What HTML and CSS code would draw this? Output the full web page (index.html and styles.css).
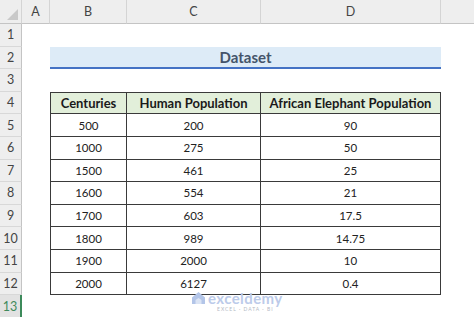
FILE: index.html
```html
<!DOCTYPE html>
<html lang="en">
<head>
    <meta charset="UTF-8">
    <title>Dataset</title>
    <link rel="stylesheet" href="styles.css">
</head>
<body>
    <div class="sheet">
        <!-- column headers -->
        <div class="corner"><span class="corner-mark"></span></div>
        <div class="col-head">A</div>
        <div class="col-head">B</div>
        <div class="col-head">C</div>
        <div class="col-head">D</div>
        <div class="col-head last"></div>

        <div class="row-head">1</div>

        <div class="row-head">2</div>
        <div class="title">Dataset</div>

        <div class="row-head">3</div>

        <div class="row-head">4</div>
        <div class="cell b head first-row">Centuries</div>
        <div class="cell c head first-row">Human Population</div>
        <div class="cell d head first-row">African Elephant Population</div>

        <div class="row-head">5</div>
        <div class="cell b">500</div>
        <div class="cell c">200</div>
        <div class="cell d">90</div>

        <div class="row-head">6</div>
        <div class="cell b">1000</div>
        <div class="cell c">275</div>
        <div class="cell d">50</div>

        <div class="row-head">7</div>
        <div class="cell b">1500</div>
        <div class="cell c">461</div>
        <div class="cell d">25</div>

        <div class="row-head">8</div>
        <div class="cell b">1600</div>
        <div class="cell c">554</div>
        <div class="cell d">21</div>

        <div class="row-head">9</div>
        <div class="cell b">1700</div>
        <div class="cell c">603</div>
        <div class="cell d">17.5</div>

        <div class="row-head">10</div>
        <div class="cell b">1800</div>
        <div class="cell c">989</div>
        <div class="cell d">14.75</div>

        <div class="row-head">11</div>
        <div class="cell b">1900</div>
        <div class="cell c">2000</div>
        <div class="cell d">10</div>

        <div class="row-head">12</div>
        <div class="cell b">2000</div>
        <div class="cell c">6127</div>
        <div class="cell d">0.4</div>

        <div class="row-head selected">13</div>

        <!-- watermark logo -->
        <div class="watermark">
            <svg class="wm-icon" width="15" height="14" viewBox="0 0 15 14">
                <path d="M1 6.5 L7.5 1 L14 6.5 L14 13 L1 13 Z" fill="#b3c5e8"/>
                <path d="M4.5 13 L4.5 9 L7.5 7 L10.5 9 L10.5 13 Z" fill="#dbe4f4"/>
            </svg>
            <div class="wm-text">
                <span class="wm-name">exceldemy</span>
                <span class="wm-sub">EXCEL · DATA · BI</span>
            </div>
        </div>
    </div>
</body>
</html>
```

FILE: styles.css
```css
body {
    margin: 0;
    background-color: #ffffff;
    font-family: Lato, "Open Sans", sans-serif;
    color: #222;
}

.sheet {
    position: relative;
    display: grid;
    grid-template-columns: 22px 28px 77px 134px 180px 1fr;
    grid-template-rows: 24px repeat(13, 22.6px);
    width: 474px;
    height: 317px;
    overflow: hidden;
}

.corner,
.col-head {
    background-color: #eeeeee;
    border-right: 1px solid #d4d4d4;
    border-bottom: 1px solid #c4c4c4;
    display: flex;
    align-items: center;
    justify-content: center;
    font-size: 12.5px;
    color: #444;
}

.col-head.last {
    border-right: none;
}

.corner {
    position: relative;
}

.corner-mark {
    position: absolute;
    right: 3px;
    bottom: 3px;
    width: 0;
    height: 0;
    border-left: 11px solid transparent;
    border-bottom: 11px solid #c9c9c9;
}

.row-head {
    grid-column: 1;
    background-color: #eeeeee;
    border-right: 1px solid #c4c4c4;
    border-bottom: 1px solid #d8d8d8;
    display: flex;
    align-items: center;
    justify-content: center;
    font-size: 12.5px;
    color: #444;
}

.row-head.selected {
    background-color: #e2e2e2;
    color: #3f8a5c;
    border-right: 2px solid #3c8a5a;
    border-bottom: none;
}

.title {
    grid-column: 3 / 6;
    background-color: #ddebf7;
    border-bottom: 2px solid #4472c4;
    display: flex;
    align-items: center;
    justify-content: center;
    font-size: 15px;
    font-weight: bold;
    color: #44546a;
}

.cell {
    border-right: 1px solid #3a3a3a;
    border-bottom: 1px solid #3a3a3a;
    display: flex;
    align-items: center;
    justify-content: center;
    font-size: 11.5px;
    color: #222;
}

.cell.b {
    grid-column: 3;
    border-left: 1px solid #3a3a3a;
}

.cell.c {
    grid-column: 4;
}

.cell.d {
    grid-column: 5;
}

.cell.head {
    background-color: #e2efda;
    font-weight: bold;
    font-size: 13px;
    color: #1a1a1a;
}

.cell.first-row {
    border-top: 1px solid #3a3a3a;
}

.watermark {
    position: absolute;
    left: 191px;
    top: 291px;
    display: flex;
    align-items: flex-start;
    gap: 2px;
}

.wm-text {
    display: flex;
    flex-direction: column;
    align-items: center;
    line-height: 1;
}

.wm-name {
    font-size: 15px;
    font-weight: bold;
    color: #bccbea;
    letter-spacing: 0.4px;
}

.wm-sub {
    font-size: 5px;
    color: #b4b9c4;
    letter-spacing: 1px;
    margin-top: 1px;
}
```
